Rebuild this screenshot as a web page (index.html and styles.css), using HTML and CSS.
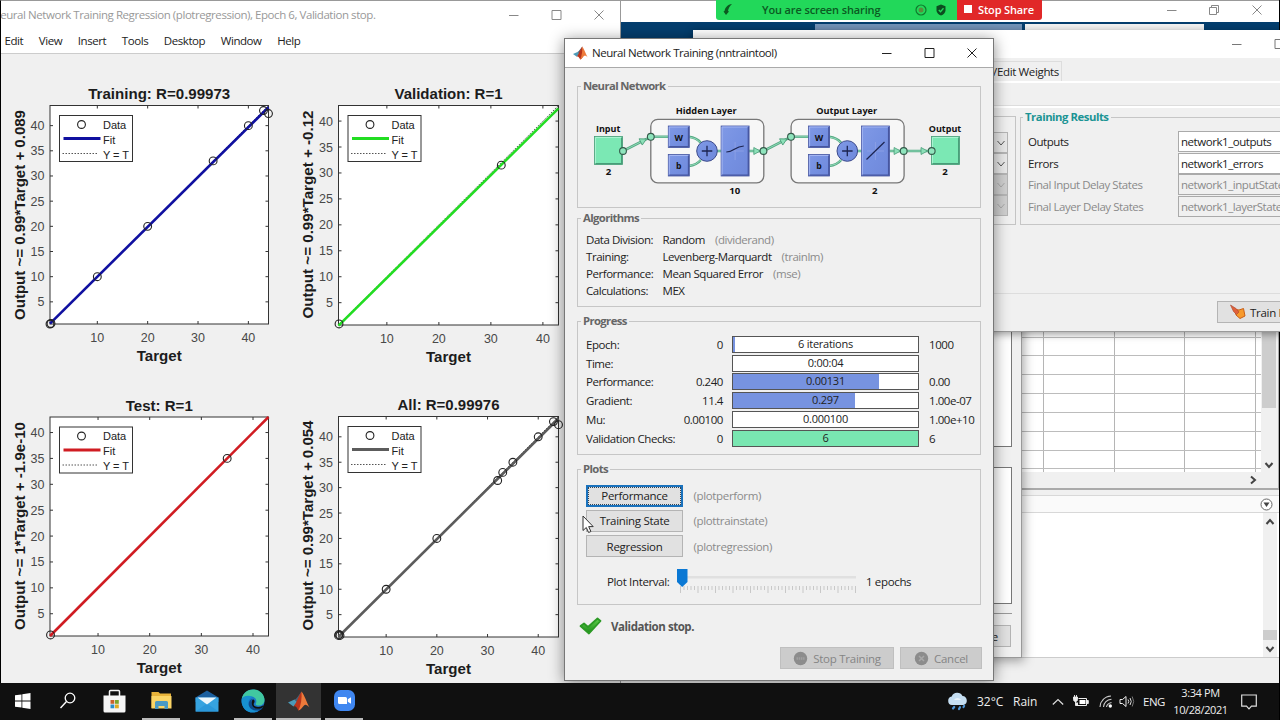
FILE: index.html
```html
<!DOCTYPE html>
<html lang="en">
<head>
    <meta charset="UTF-8">
    <title>Neural Network Training (nntraintool)</title>
    <meta name="viewport" content="width=device-width">
    <link rel="stylesheet" href="styles.css">
</head>
<body>
<svg class="defs" width="0" height="0">
    <defs>
        <symbol id="controls" viewBox="0 0 127 20">
            <path d="M16 10.500h9.500M59 5.500h9v9h-9zM101.500 5.500l9 9M110.500 5.500l-9 9"/>
        </symbol>
        <symbol id="controlsRestore" viewBox="0 0 127 20">
            <path d="M16 10.500h9.500M58.500 7.500h7v7h-7zM60.500 7.500v-2h7v7h-2M101.500 5.500l9 9M110.500 5.500l-9 9"/>
        </symbol>
        <symbol id="matlab" viewBox="0 0 22 20">
            <path d="M0 11.500L6.500 8.500 9.500 11 5.500 15.500z" fill="#4b9ab8"/>
            <path d="M6.500 8.500C9 8 11 3.500 13.500 0.500L9.500 11z" fill="#45647c"/>
            <path d="M13.500 .5C10.500 5 9 11 5.500 15.500 8 14.500 9 17 10.500 19.500 13.500 18.500 15 13.500 17 13.500z" fill="#b8341c"/>
            <path d="M13.500 .5C16.500 4 18.500 11 21.500 16.500 19 14 17.500 13 16 14.500 14.500 16 13 18.500 10.500 19.500 13 14 14 7 13.500 .5z" fill="#ee7b3b"/>
        </symbol>
        <symbol id="down" viewBox="0 0 10 10"><path d="M1.500 3l3.500 4 3.500-4"/></symbol>
        <linearGradient id="bevelBlue" x2="1" y2="1"><stop offset="0" stop-color="#8099e6"/><stop offset=".5" stop-color="#7590e1"/><stop offset="1" stop-color="#6f88da"/></linearGradient>
        <linearGradient id="greenCheck" x2="0" y2="1"><stop offset="0" stop-color="#5fd04a"/><stop offset="1" stop-color="#1d8c1a"/></linearGradient>
    </defs>
</svg>

<div class="desktop">

    <!-- MATLAB main window -->
    <div class="window main_window">
        <div class="titlebar"><svg class="controls faded"><use href="#controlsRestore"/></svg></div>
        <div class="ribbon"><div class="ribbon_tabs"></div><div class="ribbon_search"></div></div>
        <div class="variables">
            <div class="sheet"></div>
            <div class="vscroll"><div class="thumb"></div><svg class="arrow"><use href="#down"/></svg></div>
            <div class="hscroll"><svg class="arrow right"><use href="#down"/></svg></div>
        </div>
        <div class="command_head">
            <svg width="13" height="13"><circle cx="6.500" cy="6.500" r="5.500" fill="#fff" stroke="#666"/><path d="M3.500 4.500h6L6.500 9z" fill="#444"/></svg>
        </div>
        <div class="command">
            <div class="vscroll command_scroll"><svg class="arrow up"><use href="#down"/></svg><div class="thumb"></div><svg class="arrow"><use href="#down"/></svg></div>
        </div>
    </div>

    <div class="share_bar">
        <div class="share_green">
            <svg width="10" height="12" viewBox="0 0 10 12"><path d="M9 0C4.500 .5 2 3.500 1.500 7L.5 7.500 3 11 6 7.500 5 7C5.200 4.500 7 2 9 0z" fill="#0c5a20"/></svg>
            <span>You are screen sharing</span>
            <svg width="12" height="12" viewBox="0 0 12 12"><circle cx="6" cy="6" r="5" fill="none" stroke="#0f7a2c" stroke-width="1.200"/><circle cx="6" cy="6" r="2.500" fill="#5c8c3c"/></svg>
            <svg width="10" height="12" viewBox="0 0 10 12"><path d="M5 .5L9.500 2.300v4C9.500 9 7.500 10.800 5 11.500 2.500 10.800.5 9 .5 6.300v-4z" fill="#0c4d20"/><path d="M2.800 6L4.500 7.700 7.500 4.300" fill="none" stroke="#22d85a" stroke-width="1.300"/></svg>
        </div>
        <div class="share_red"><i></i><span>Stop Share</span></div>
    </div>

    <!-- nntool manager, mostly hidden -->
    <div class="window manager">
        <div class="list first"></div>
        <div class="list second"></div>
        <div class="rule"></div>
        <div class="btn">Close</div>
    </div>

    <!-- network1 window -->
    <div class="window network">
        <div class="titlebar"><svg class="controls gray"><use href="#controls"/></svg></div>
        <div class="tabs"><span class="tab">View/Edit Weights</span></div>
        <div class="subtabs"></div>
        <div class="network_row">
            <div class="combos">
                <div class="combo"><svg><use href="#down"/></svg></div>
                <div class="combo"><svg><use href="#down"/></svg></div>
                <div class="combo off"><svg><use href="#down"/></svg></div>
                <div class="combo off"><svg><use href="#down"/></svg></div>
            </div>
            <fieldset class="results">
                <legend>Training Results</legend>
                <div class="field"><span>Outputs</span><b>network1_outputs</b></div>
                <div class="field"><span>Errors</span><b>network1_errors</b></div>
                <div class="field off"><span>Final Input Delay States</span><b>network1_inputStates</b></div>
                <div class="field off"><span>Final Layer Delay States</span><b>network1_layerStates</b></div>
            </fieldset>
        </div>
        <div class="train_bar">
            <div class="btn">
                <svg width="16" height="16" viewBox="0 0 16 16"><path d="M5 5.500L9 6 13.500 4.500 15 12 10 14.500 6 11z" fill="#f79a2c" stroke="#c85f18"/><path d="M.5 1L6 4.500 9 8 6.500 10.500 3.500 7.500z" fill="#e0603a" stroke="#a8442c" stroke-width=".6"/></svg>
                Train Network
            </div>
        </div>
    </div>

    <!-- regression figure -->
    <div class="window figure">
        <div class="titlebar">
            <span class="title">Neural Network Training Regression (plotregression), Epoch 6, Validation stop.</span>
            <svg class="controls faded"><use href="#controls"/></svg>
        </div>
        <div class="menu"><span>Edit</span><span>View</span><span>Insert</span><span>Tools</span><span>Desktop</span><span>Window</span><span>Help</span></div>
        <div class="plots">
            <svg id="plotTraining" viewBox="0 53 290 314"></svg>
            <svg id="plotValidation" viewBox="290 53 330 314"></svg>
            <svg id="plotTest" viewBox="0 367 290 316"></svg>
            <svg id="plotAll" viewBox="290 367 330 316"></svg>
        </div>
    </div>

    <!-- training dialog -->
    <div class="window dialog">
        <div class="titlebar">
            <svg class="app_icon"><use href="#matlab"/></svg>
            <span class="title">Neural Network Training (nntraintool)</span>
            <svg class="controls"><use href="#controls"/></svg>
        </div>
        <div class="dialog_body">
            <fieldset class="group_net">
                <legend>Neural Network</legend>
                <svg id="diagram" viewBox="578 94 402 113"></svg>
            </fieldset>

            <fieldset class="group_algo">
                <legend>Algorithms</legend>
                <div class="algo"><span>Data Division:</span>Random<em>(dividerand)</em></div>
                <div class="algo"><span>Training:</span>Levenberg-Marquardt<em>(trainlm)</em></div>
                <div class="algo"><span>Performance:</span>Mean Squared Error<em>(mse)</em></div>
                <div class="algo"><span>Calculations:</span>MEX</div>
            </fieldset>

            <fieldset class="group_progress">
                <legend>Progress</legend>
                <div class="progress"><span>Epoch:</span><span class="from">0</span><div class="bar"><i style="width:1%"></i><b>6 iterations</b></div><span class="to">1000</span></div>
                <div class="progress"><span>Time:</span><span class="from"></span><div class="bar"><b>0:00:04</b></div><span class="to"></span></div>
                <div class="progress"><span>Performance:</span><span class="from">0.240</span><div class="bar"><i style="width:78.7%"></i><b>0.00131</b></div><span class="to">0.00</span></div>
                <div class="progress"><span>Gradient:</span><span class="from">11.4</span><div class="bar"><i style="width:66%"></i><b>0.297</b></div><span class="to">1.00e-07</span></div>
                <div class="progress"><span>Mu:</span><span class="from">0.00100</span><div class="bar"><b>0.000100</b></div><span class="to">1.00e+10</span></div>
                <div class="progress"><span>Validation Checks:</span><span class="from">0</span><div class="bar"><i class="full" style="width:100%"></i><b>6</b></div><span class="to">6</span></div>
            </fieldset>

            <fieldset class="group_plots">
                <legend>Plots</legend>
                <div class="plot_row"><div class="btn focus">Performance</div><em>(plotperform)</em></div>
                <div class="plot_row"><div class="btn">Training State</div><em>(plottrainstate)</em></div>
                <div class="plot_row"><div class="btn">Regression</div><em>(plotregression)</em></div>
                <div class="interval">
                    <span>Plot Interval:</span>
                    <svg class="slider" width="184" height="28" viewBox="0 0 184 28"></svg>
                    <span>1 epochs</span>
                </div>
            </fieldset>

            <div class="status">
                <svg width="23" height="18" viewBox="0 0 23 18"><path d="M1.500 9L5 6.500l4 3.500L18.500 1.500 21.500 4 10 16.500z" fill="url(#greenCheck)" stroke="#2c9a25" stroke-width="1.800" stroke-linejoin="round"/></svg>
                <span>Validation stop.</span>
            </div>
            <div class="actions">
                <div class="btn stop"><svg width="15" height="15"><circle cx="7.500" cy="7.500" r="6.700" fill="#8c8c8c"/><path d="M3.500 7.500h8" stroke="#a0a0a0" stroke-width="2.500" stroke-dasharray="1.500 .7"/></svg>Stop Training</div>
                <div class="btn cancel"><svg width="15" height="15"><circle cx="7.500" cy="7.500" r="6.700" fill="#8c8c8c"/><path d="M5 5l5 5M10 5l-5 5" stroke="#a8a8a8" stroke-width="1.500"/></svg>Cancel</div>
            </div>
        </div>
    </div>

    <svg class="cursor" width="14" height="20" viewBox="0 0 14 20"><path d="M1 1v14.500l3.300-3L6.600 17.500l2.300-1L6.700 11.600h4.500z" fill="#fff" stroke="#333"/></svg>

    <!-- taskbar -->
    <div class="taskbar">
        <div class="task start"><svg width="16" height="16" viewBox="0 0 16 16"><path d="M0 2.300L6.500 1.400v6.200H0zM7.300 1.300L15.500 0v7.600H7.300zM0 8.400h6.500v6.200L0 13.700zM7.300 8.400h8.200V16l-8.200-1.200z" fill="#fff"/></svg></div>
        <div class="task search"><svg width="18" height="18" viewBox="0 0 18 18"><circle cx="11" cy="6" r="4.800" fill="none" stroke="#fff" stroke-width="1.300"/><path d="M7.500 9.500L1.500 16" stroke="#fff" stroke-width="1.400"/></svg></div>
        <div class="task"><svg width="23" height="24" viewBox="0 0 23 24"><path d="M6.500 7V2.500a1 1 0 0 1 1-1h8a1 1 0 0 1 1 1V7" fill="none" stroke="#f4f4f4" stroke-width="1.500"/><path d="M.5 6.500h22V22a1.500 1.500 0 0 1-1.500 1.500H2A1.500 1.500 0 0 1 .5 22z" fill="#f5f5f5"/><path d="M7.500 11h3.800v3.800H7.500z" fill="#c9622c"/><path d="M12 11h3.800v3.800H12z" fill="#7ca52c"/><path d="M7.500 15.500h3.800v3.800H7.500z" fill="#2c8fc9"/><path d="M12 15.500h3.800v3.800H12z" fill="#e0ab22"/></svg></div>
        <div class="task open"><svg width="21" height="19" viewBox="0 0 21 19"><path d="M.5 1h7l1.500 1.500h11V17H.5z" fill="#e8b33a"/><path d="M.5 5h20v12.500H.5z" fill="#fbd566"/><path d="M4 18v-6.500a1.500 1.500 0 0 1 1.500-1.500h10a1.500 1.500 0 0 1 1.500 1.500V18h-3.500v-3h-6v3z" fill="#4a9ac4"/></svg></div>
        <div class="task"><svg width="24" height="22" viewBox="0 0 24 22"><path d="M.5 7.500L12 .5l11.500 7V12H.5z" fill="#1b5f9e"/><path d="M.5 7.500h23v14H.5z" fill="#36a3e0"/><path d="M.5 21.500L12 13.500l11.500 8z" fill="#2b98da"/><path d="M2.500 7.500h19L12 14.500z" fill="#edf6fb"/></svg></div>
        <div class="task open edge"><svg width="24" height="24" viewBox="0 0 24 24"><circle cx="12" cy="12" r="11.500" fill="#1c77c8"/><path d="M.8 10C2 3.500 7 .5 12 .5 19 .5 23.500 5.500 23.500 11c0 3.500-2.500 5.500-5.500 5.500-2.500 0-4-1-3-2.500 1-2 0-5.500-4-6.500C6 6.500 2 8 .8 10z" fill="#41c7a0"/><path d="M.8 10C3 6.500 8 6 11.500 8 8 9 6.500 13 8 16.500 9.500 20.500 14 22 18 21 14 24.500 7 24 3.500 20 1 17 .3 13.500.8 10z" fill="#1790d0"/><path d="M11.500 10c-2 2-1.500 6 1 8 3 2.200 6.500 2 9.500.5-1 1.500-2.500 2.500-4 3-4 .5-8.500-.5-10-4.500-1-3 .5-6.500 3.500-7z" fill="#0d4a8c"/><path d="M12 10.200c2.500 1 1.500 3 .8 4.300-.8 2 2.200 4 6 3.300 1.500-.3 3-1 3.700-2-.2 1.500-1 3-2.500 3.500-3 1-6.500.5-8-1.500-2-2.500-1.800-6 0-7.600z" fill="#101010"/></svg></div>
        <div class="task open active"><svg width="22" height="20"><use href="#matlab"/></svg></div>
        <div class="task open zoom"><svg width="21" height="21" viewBox="0 0 21 21"><rect width="21" height="21" rx="6.500" fill="#4087f0"/><path d="M4 7h7.500a1.500 1.500 0 0 1 1.500 1.500V14H5.500A1.500 1.500 0 0 1 4 12.500zM13.800 9.300L17 7.200v6.600l-3.200-2.100z" fill="#fff"/></svg></div>
        <div class="tray">
            <svg class="weather" width="21" height="20" viewBox="0 0 21 20"><path d="M5 13a4.300 4.300 0 0 1-.3-8.500A6 6 0 0 1 15.500 4 4.600 4.600 0 0 1 16.500 13z" fill="#c5def2"/><path d="M7 8a4 4 0 0 1 7 0" fill="#e9f3fb"/><path d="M6 16.500l1.200-1.500M12 17l1-1.800M16.500 15l.6-1" stroke="#4c95d8" stroke-width="2.200" stroke-linecap="round"/></svg>
            <span class="temp">32°C</span><span class="rain">Rain</span>
            <svg class="chev" width="12" height="8" viewBox="0 0 12 8"><path d="M.8 6.500L6 1.500l5.200 5" fill="none" stroke="#ddd" stroke-width="1.200"/></svg>
            <svg class="battery" width="16" height="13" viewBox="0 0 16 13"><path d="M5.500 3.500h8v7H4.500v-3" fill="none" stroke="#eee"/><path d="M14 5.500h1.300v3H14zM.5 2h4v2.500a2 2 0 0 1-4 0zM1.500 0v2M3.500 0v2M2.500 6v4.500h3" fill="#eee" stroke="#eee" stroke-width=".9"/><path d="M6.500 5h6v4h-6z" fill="#fff"/></svg>
            <svg class="wifi" width="14" height="13" viewBox="0 0 14 13"><path d="M1 12C1.500 6 5.500 1.500 12 1M4.500 12C5 8 8 4.800 12.500 4.300M7.500 12C8 9.500 10 8 12.500 7.500" fill="none" stroke="#ccc" stroke-width="1.100"/><circle cx="11.300" cy="11" r="1.700" fill="#fff"/></svg>
            <svg class="sound" width="16" height="13" viewBox="0 0 16 13"><path d="M1 4.500h2.500L7 1.500v10l-3.500-3H1z" fill="none" stroke="#eee"/><path d="M9 4.500q1.500 2 0 4M11 3q2.500 3.500 0 7" fill="none" stroke="#ddd"/><path d="M13.200 1.500q3 5 0 10" fill="none" stroke="#777"/></svg>
            <span class="lang">ENG</span>
            <div class="clock"><span>3:34 PM</span><span>10/28/2021</span></div>
            <svg class="notes" width="16" height="16" viewBox="0 0 16 16"><path d="M.7 1h14.600v11.200H10.500L8 14.800 5.500 12.200H.7z" fill="none" stroke="#ddd" stroke-width="1.200"/></svg>
        </div>
    </div>
</div>
<script src="script.js"></script>
</body>
</html>
```
FILE: styles.css
```css
body {
  margin: 0;
  font-family: "Open Sans", "Noto Sans", sans-serif;
  font-size: 11.5px;
  letter-spacing: -0.45px;
  color: #222;
  overflow: hidden;
}

.defs {
  position: absolute;
}

.desktop {
  position: relative;
  width: 1280px;
  height: 720px;
  overflow: hidden;
  background: #000;
}

.window {
  position: absolute;
  box-sizing: border-box;
  overflow: hidden;
  background: #f0f0f0;
}

.titlebar {
  display: flex;
  align-items: center;
  background: #fff;
  white-space: nowrap;
}

.title {
  padding-bottom: 2px;
}

.controls {
  width: 127px;
  height: 20px;
  flex: none;
  margin-left: auto;
  fill: none;
  stroke: #222;
  stroke-width: 1;
}

.controls.faded { stroke: #888; }
.controls.gray { stroke: #777; }

fieldset {
  box-sizing: border-box;
  margin: 0;
  padding: 0;
  border: 1px solid #c6c6c6;
  min-width: 0;
}

legend {
  height: 16px;
  line-height: 16px;
  margin-left: 3px;
  padding: 0 2px;
  font-size: 11.3px;
  font-weight: bold;
  letter-spacing: -0.62px;
  color: #666;
}

em {
  font-style: normal;
  color: #8b8b8b;
}

.btn {
  box-sizing: border-box;
  display: flex;
  align-items: center;
  justify-content: center;
  border: 1px solid #b4b4b4;
  background: #e1e1e1;
  white-space: nowrap;
  color: #222;
}

.arrow {
  width: 10px;
  height: 10px;
  fill: none;
  stroke: #444;
  stroke-width: 2;
}

.arrow.right { transform: rotate(-90deg); }
.arrow.up { transform: rotate(180deg); }

/* main window */
.main_window {
  left: 620px;
  top: 0;
  width: 659px;
  height: 683px;
  border-top: 1px solid #999;
}

.main_window > .titlebar {
  height: 21px;
  padding-right: 1px;
}

.main_window > .titlebar .controls { margin-bottom: 3px; }

.ribbon {
  height: 309px;
  display: flex;
  align-items: flex-start;
  gap: 3px;
  padding-left: 195px;
  background: #043e6e;
}

.ribbon_tabs, .ribbon_search {
  margin-top: 2px;
  width: 207px;
  height: 8px;
  background: #7393b8;
}

.ribbon_search {
  width: 179px;
  background: #f2f2f2;
}

.variables {
  display: grid;
  grid-template-columns: 641px 16px;
  grid-template-rows: 141px 16px;
  border-right: 1px solid #aaa;
  border-bottom: 2px solid #aaa;
}

.sheet {
  background:
    repeating-linear-gradient(to bottom, transparent 0 5.5px, #bcbcbc 5.5px 6.5px, transparent 6.5px 18.85px),
    repeating-linear-gradient(to right, transparent 0 1px, #b5b5b5 1px 2px, transparent 2px 70.4px),
    #fff;
}

.vscroll {
  display: flex;
  flex-direction: column;
  justify-content: space-between;
  align-items: center;
  background: #f0f0f0;
}

.vscroll .thumb {
  width: 14px;
  height: 77px;
  background: #cdcdcd;
}

.vscroll > .arrow:last-child { margin-bottom: 2px; }

.hscroll {
  grid-column: 1 / 3;
  display: flex;
  align-items: center;
  padding-left: 628px;
}

.command_head {
  display: flex;
  align-items: center;
  justify-content: flex-end;
  box-sizing: border-box;
  height: 18px;
  margin-top: 5px;
  padding-right: 6px;
  border-top: 1px solid #d8d8d8;
  border-bottom: 1px solid #d8d8d8;
  background: #fafafa;
}

.command {
  display: flex;
  justify-content: flex-end;
  height: 144px;
  background: #fff;
  border-bottom: 1px solid #ccc;
  padding-right: 2px;
}

.command_scroll {
  box-sizing: border-box;
  width: 14px;
  padding: 4px 0 1px;
}

.command_scroll .thumb {
  height: 10px;
  margin: auto 0 4px;
}

/* sharing bar */
.share_bar {
  position: absolute;
  left: 716px;
  top: 0;
  display: flex;
  height: 20px;
  font-weight: 600;
  font-size: 11px;
}

.share_green {
  display: flex;
  align-items: center;
  width: 241px;
  box-sizing: border-box;
  padding-left: 7px;
  background: #22d85a;
  color: #0b5a22;
  border-radius: 0 0 0 3px;
}

.share_green span {
  width: 119px;
  margin: 0 34px 0 29px;
  padding-bottom: 1px;
  letter-spacing: -0.12px;
  white-space: nowrap;
}

.share_green svg:last-child { margin-left: 9px; }

.share_red {
  display: flex;
  align-items: center;
  width: 85px;
  box-sizing: border-box;
  padding: 0 0 2px 7px;
  background: #e12828;
  color: #fff;
  white-space: nowrap;
  letter-spacing: -0.15px;
  border-radius: 0 0 3px 0;
}

.share_red i {
  width: 8px;
  height: 8px;
  margin-right: 6px;
  background: #fff;
}

/* manager window */
.manager {
  left: 860px;
  top: 300px;
  width: 162px;
  height: 358px;
  border-right: 1px solid #999;
  border-bottom: 1px solid #999;
  box-shadow: 2px 3px 10px rgba(0, 0, 0, .35);
}

.list {
  box-sizing: border-box;
  width: 152px;
  border: 1px solid #777;
  background: #fff;
}

.list.first { height: 147px; }
.list.second { height: 137px; margin-top: 20px; }

.rule {
  width: 152px;
  height: 9px;
  border-bottom: 1px solid #999;
}

.manager .btn {
  width: 60px;
  height: 22px;
  margin: 11px 0 0 91px;
  justify-content: flex-start;
  padding-left: 19px;
}

/* network window */
.network {
  left: 693px;
  top: 30px;
  width: 650px;
  height: 302px;
  border-bottom: 1px solid #999;
  box-shadow: 0 2px 8px rgba(0, 0, 0, .4);
}

.network .titlebar { height: 28px; }
.network .controls { margin-bottom: 1px; }

.tabs {
  display: flex;
  align-items: flex-end;
  height: 23px;
  border-bottom: 2px solid #fff;
}

.tab {
  box-sizing: border-box;
  height: 20px;
  width: 110px;
  margin-left: 259px;
  line-height: 19px;
  padding-right: 2px;
  text-align: right;
  border: 1px solid #ddd;
  border-bottom: 0;
  white-space: nowrap;
  letter-spacing: -0.35px;
}

.subtabs {
  height: 22px;
  border-bottom: 1px solid #ddd;
}

.network_row {
  display: flex;
  align-items: flex-start;
  padding-left: 202px;
  border-top: 2px solid #fff;
}

.combos {
  box-sizing: border-box;
  width: 121px;
  height: 109px;
  margin: 8px 4px 0 0;
  padding: 15px 7px 0 97px;
  border: 1px solid #c4c4c4;
}

.combo {
  box-sizing: border-box;
  height: 21px;
  border: 1px solid #b5b5b5;
  background: #e9e9e9;
}

.combo svg {
  width: 10px;
  height: 10px;
  margin: 5px 0 0 2px;
  display: block;
  fill: none;
  stroke: #555;
}

.combo.off { background: #cfcfcf; }
.combo.off svg { stroke: #aaa; }

.results {
  width: 320px;
  height: 116px;
  margin-top: 1px;
}

.results legend {
  margin-left: 2px;
  color: #1b9494;
  letter-spacing: -0.45px;
}

.field {
  display: flex;
  align-items: center;
  height: 21.7px;
  padding-left: 7px;
}

legend + .field { margin-top: 5.5px; }

.field span {
  width: 150px;
  white-space: nowrap;
}

.field b {
  box-sizing: border-box;
  flex: 1;
  height: 21px;
  line-height: 19px;
  padding-left: 2px;
  border: 1px solid #aaa;
  background: #fff;
  font-weight: normal;
}

.field.off { color: #8a8a8a; }
.field.off b { background: #f0f0f0; }

.train_bar {
  margin-top: 68px;
  border-top: 1px solid #ddd;
  padding: 7px 0 0 524px;
}

.train_bar .btn {
  width: 120px;
  height: 22px;
  justify-content: flex-start;
  padding-left: 12px;
  gap: 4px;
  letter-spacing: -0.3px;
}

/* figure window */
.figure {
  left: 0;
  top: 0;
  width: 621px;
  height: 683px;
  border-left: 1px solid #000;
  border-top: 1px solid #999;
  border-right: 1px solid #999;
}

.figure .titlebar {
  height: 28px;
  color: #999;
}

.figure .title {
  margin-left: -9px;
  letter-spacing: -0.44px;
}

.figure .controls { margin-bottom: 1px; }

.menu {
  display: flex;
  gap: 15.7px;
  height: 24px;
  line-height: 24px;
  padding-left: 3.5px;
  background: #fff;
  border-bottom: 1px solid #ccc;
}

.plots {
  display: grid;
  grid-template-columns: 290px 330px;
  grid-template-rows: 314px 316px;
  margin: -1px 0 0 -1px;
}

.plots svg {
  width: 100%;
  height: 100%;
  font-family: "Liberation Sans", Arial, sans-serif;
  letter-spacing: 0;
}

.axes {
  fill: #fff;
  stroke: #333;
}

.ticks {
  stroke: #333;
}

.tick_label {
  font-size: 12.5px;
  fill: #484848;
}

.plot_title, .axis_label {
  font-size: 15px;
  font-weight: bold;
  fill: #1c1c1c;
}

.legend_text {
  font-size: 11px;
  fill: #222;
}

.marker {
  fill: none;
  stroke: #222;
  stroke-width: 1.1;
}

.dotted {
  stroke: #555;
  stroke-dasharray: 1.5 1.5;
}

/* training dialog */
.dialog {
  left: 564px;
  top: 38px;
  width: 430px;
  height: 643px;
  border: 1px solid #777;
  box-shadow: 0 2px 14px rgba(0, 0, 0, .45);
}

.dialog .titlebar {
  height: 28px;
  border-bottom: 1px solid #aaa;
  color: #222;
}

.app_icon {
  width: 15px;
  height: 14px;
  margin: 0 4px 0 8px;
}

.dialog_body {
  padding: 10px 12px 0;
}

.group_net { height: 130px; }
#diagram { display: block; width: 402px; height: 113px; letter-spacing: 0; }

.group_algo { height: 97px; margin-top: 2px; }

.algo {
  height: 17px;
  line-height: 16px;
  padding-left: 8px;
  display: flex;
}

legend + .algo { margin-top: 6px; }
.algo span { width: 76.5px; }
.algo em { margin-left: 10px; }

.group_progress { height: 142px; margin-top: 6px; }

.progress {
  display: grid;
  grid-template-columns: 70px 67px 187px 60px;
  align-items: center;
  height: 18.8px;
  padding-left: 8px;
  white-space: nowrap;
}

legend + .progress { margin-top: 6px; }
.progress .from { text-align: right; }
.progress .to { padding-left: 19px; }

.bar {
  position: relative;
  box-sizing: border-box;
  height: 17px;
  margin: 0 -9px 0 9px;
  border: 1px solid #555;
  background: #fff;
}

.bar i {
  display: block;
  height: 100%;
  background: #7793e0;
}

.bar i.full { background: #79e6b1; }

/* value printed over the fill */
.bar b {
  position: absolute;
  inset: 0;
  line-height: 14px;
  text-align: center;
  font-weight: normal;
  font-size: 11px;
  letter-spacing: -0.25px;
}

.group_plots { height: 144px; margin-top: 6px; }

.plot_row {
  display: flex;
  align-items: center;
  height: 25.3px;
  padding-left: 8px;
}

legend + .plot_row { margin-top: 6px; }

.plot_row .btn {
  width: 97px;
  height: 22px;
  margin-right: 10.5px;
  letter-spacing: -0.3px;
}

.plot_row em { letter-spacing: -0.35px; }

.btn.focus {
  border: 2px solid #1a72bd;
  outline: 1px dotted #345;
  outline-offset: -3px;
}

.interval {
  display: flex;
  align-items: center;
  height: 28px;
  margin-top: 9px;
  padding-left: 29px;
  letter-spacing: -0.35px;
}

.interval span:first-child { width: 66px; }
.slider { margin: 0 10px 0 -1px; }

.status {
  display: flex;
  align-items: center;
  gap: 9px;
  height: 22px;
  margin: 10px 0 0 2px;
  font-weight: bold;
  color: #555;
}

.actions {
  display: flex;
  justify-content: flex-end;
  gap: 6px;
  margin: 10px -1px 0 0;
}

.actions .btn {
  height: 22px;
  gap: 5px;
  background: #ccc;
  border-color: #bfbfbf;
  color: #858585;
  letter-spacing: -0.25px;
}

.stop { width: 114px; }
.cancel { width: 82px; }

.cursor {
  position: absolute;
  left: 582px;
  top: 515px;
}

/* taskbar */
.taskbar {
  position: absolute;
  left: 0;
  top: 683px;
  width: 1279px;
  height: 37px;
  display: flex;
  background: #101010;
  color: #eee;
  letter-spacing: 0;
}

.task {
  box-sizing: border-box;
  width: 46px;
  display: flex;
  align-items: center;
  justify-content: center;
  border-bottom: 2px solid transparent;
}

.task.start { width: 45px; }
.task.search { width: 46px; }
.task.open {
  width: 38px;
  margin: 0 4px;
  border-bottom-color: #bbb;
}
.task.open.active { width: 45px; margin: 0; background: #333; }
.task.open.zoom { margin: 0 0 0 4px; }

.task:nth-child(3) { width: 47px; }

.tray {
  flex: 1;
  display: flex;
  align-items: center;
  justify-content: flex-end;
  font-size: 12px;
  white-space: nowrap;
}

.temp { width: 27px; margin: 0 9px 0 9px; }
.rain { width: 25px; margin-right: 14px; }
.battery { margin: 0 10px 0 9px; }
.wifi { margin-right: 6px; }
.lang { width: 21px; margin: 0 10px 0 8px; font-size: 11.5px; letter-spacing: -0.5px; }

.clock {
  width: 53px;
  display: flex;
  flex-direction: column;
  align-items: center;
  line-height: 16.5px;
  font-size: 11px;
  letter-spacing: -0.4px;
}

.notes { margin: 0 22px 0 14px; }
```
FILE: script.js
```js
function tag(name, attrs, text) {
    const a = Object.entries(attrs).map(([k, v]) => `${k}="${v}"`).join(' ');
    return `<${name} ${a}>${text || ''}</${name}>`;
}

// centred text squeezed to a known width
function label(cls, cx, y, width, text, extra) {
    return tag('text', Object.assign({class: cls, x: cx, y: y, 'text-anchor': 'middle', textLength: width, lengthAdjust: 'spacingAndGlyphs'}, extra), text);
}

function drawPlot(p) {
    const sx = v => p.x0 + (v - p.min) * (p.x1 - p.x0) / (p.max - p.min);
    const sy = v => p.y1 - (v - p.min) * (p.y1 - p.y0) / (p.max - p.min);
    const cx = (p.x0 + p.x1) / 2;
    let s = tag('rect', {class: 'axes', x: p.x0, y: p.y0, width: p.x1 - p.x0, height: p.y1 - p.y0});

    let ticks = '';
    for (let v = 10; v <= 40; v += 10) {
        ticks += `M${sx(v)} ${p.y1}v-3M${sx(v)} ${p.y0}v3`;
        s += tag('text', {class: 'tick_label', x: sx(v), y: p.y1 + 17.5, 'text-anchor': 'middle'}, v);
    }
    for (let v = 5; v <= 40; v += 5) {
        ticks += `M${p.x0} ${sy(v)}h3M${p.x1} ${sy(v)}h-3`;
        s += tag('text', {class: 'tick_label', x: p.x0 - 5.5, y: sy(v) + 4.5, 'text-anchor': 'end'}, v);
    }
    s += tag('path', {class: 'ticks', d: ticks});

    s += tag('line', {class: 'dotted', x1: sx(p.min), y1: sy(p.min), x2: sx(p.max), y2: sy(p.max)});
    s += tag('line', {x1: sx(p.min), y1: sy(p.fit[0] * p.min + p.fit[1]), x2: sx(p.max), y2: sy(p.fit[0] * p.max + p.fit[1]), stroke: p.color, 'stroke-width': 2.6});
    p.points.forEach(([x, y]) => {
        s += tag('circle', {class: 'marker', cx: sx(x), cy: sy(y), r: 3.9});
    });

    const lx = p.x0 + 9.5, ly = p.y0 + 10;
    s += tag('rect', {class: 'axes', x: lx, y: ly, width: 73, height: 46});
    s += tag('circle', {class: 'marker', cx: lx + 22, cy: ly + 9, r: 3.9});
    s += tag('line', {x1: lx + 4, y1: ly + 23, x2: lx + 41, y2: ly + 23, stroke: p.color, 'stroke-width': 2.8});
    s += tag('line', {class: 'dotted', x1: lx + 3, y1: ly + 38, x2: lx + 39, y2: ly + 38});
    s += tag('text', {class: 'legend_text', x: lx + 43.5, y: ly + 13}, 'Data');
    s += tag('text', {class: 'legend_text', x: lx + 43.5, y: ly + 28}, 'Fit');
    s += tag('text', {class: 'legend_text', x: lx + 43.5, y: ly + 43, textLength: 26}, 'Y = T');

    s += label('plot_title', cx, p.titleY, p.titleW, p.title);
    s += label('axis_label', cx, p.y1 + 36.5, 45, 'Target');
    s += label('axis_label', 0, 0, p.labelW, p.ylabel, {transform: `translate(${p.x0 - 25.5} ${p.labelY}) rotate(-90)`});
    document.getElementById(p.id).innerHTML = s;
}

drawPlot({id: 'plotTraining', x0: 50, x1: 268.5, y0: 105.5, y1: 324, min: 0.6, max: 44, fit: [0.99, 0.089], color: '#1010a0',
    title: 'Training: R=0.99973', titleY: 99, titleW: 142, ylabel: 'Output ~= 0.99*Target + 0.089', labelY: 215, labelW: 210,
    points: [[0.6, 0.6], [0.8, 0.7], [10, 10], [20, 20], [33, 33], [40, 40], [43, 43], [44, 42.4]]});
drawPlot({id: 'plotValidation', x0: 338.5, x1: 558.5, y0: 105.5, y1: 325, min: 0.7, max: 43, fit: [0.99, -0.12], color: '#22dd22',
    title: 'Validation: R=1', titleY: 98.5, titleW: 108, ylabel: 'Output ~= 0.99*Target + -0.12', labelY: 214.5, labelW: 208,
    points: [[0.8, 0.9], [32, 31.5]]});
drawPlot({id: 'plotTest', x0: 50, x1: 268.5, y0: 417, y1: 636, min: 0.7, max: 43, fit: [1, 0], color: '#d01c22',
    title: 'Test: R=1', titleY: 410.5, titleW: 67, ylabel: 'Output ~= 1*Target + -1.9e-10', labelY: 526, labelW: 208,
    points: [[0.8, 0.9], [35, 35]]});
drawPlot({id: 'plotAll', x0: 338.5, x1: 558.5, y0: 416.5, y1: 637, min: 0.6, max: 44, fit: [0.99, 0.054], color: '#5c5c5c',
    title: 'All: R=0.99976', titleY: 410, titleW: 102, ylabel: 'Output ~= 0.99*Target + 0.054', labelY: 525.5, labelW: 210,
    points: [[0.6, 0.9], [0.9, 0.9], [0.7, 1.1], [10, 10], [20, 20], [32, 31.4], [33, 33], [35, 35], [40, 40], [43, 43], [44, 42.4]]});

// network diagram
function block(x, y, w, h, kind) {
    const fill = kind === 'io' ? '#7be8b4' : 'url(#bevelBlue)';
    const dark = kind === 'io' ? '#489c78' : '#4656a0';
    const light = kind === 'io' ? '#a8f3d0' : '#a3b5f2';
    return tag('rect', {x: x, y: y, width: w, height: h, fill: fill, stroke: dark, 'stroke-width': .8}) +
        tag('path', {d: `M${x + 1} ${y + h - 1}V${y + 1}H${x + w - 1}`, fill: 'none', stroke: light, 'stroke-width': 1}) +
        tag('path', {d: `M${x + w - .8} ${y + 1}V${y + h - .8}H${x + 1}`, fill: 'none', stroke: dark, 'stroke-width': 1.3});
}
function port(x, y) {
    return tag('circle', {cx: x, cy: y, r: 3.4, fill: '#8fe5bd', stroke: '#34594a', 'stroke-width': 1.1});
}
function wire(d) {
    return tag('path', {d: d, fill: 'none', stroke: '#55aa83', 'stroke-width': 2.6}) +
        tag('path', {d: d, fill: 'none', stroke: '#90d8b8', 'stroke-width': 1});
}
function arrow(x, y, angle) {
    return tag('path', {d: 'M-6-3.500L.5 0-6 3.500z', fill: '#8ce0b8', stroke: '#4a9c78', 'stroke-width': .8, transform: `translate(${x} ${y}) rotate(${angle})`});
}
function text(cx, y, w, t) {
    return label('', cx, y, w, t, {'font-size': 9.5, 'font-weight': 'bold', fill: '#111'});
}
function layer(x, curve) {
    return tag('rect', {x: x, y: 119.3, width: 113, height: 63.5, rx: 7, fill: '#f7f7f7', stroke: '#777', 'stroke-width': 1.3}) +
        wire(`M${x} 136.800h18M${x + 38} 136.800q8 1 12 6M${x + 38} 166q8-1 12-6M${x + 66} 151h5M${x + 98} 151h14`) +
        arrow(x + 109, 151, 0) +
        block(x + 17.5, 126, 21, 21.5) + block(x + 17.5, 154.5, 21, 21.5) + block(x + 70.3, 126, 28, 50) +
        tag('circle', {cx: x + 56.2, cy: 151, r: 10.3, fill: 'url(#bevelBlue)', stroke: '#3d4b8c'}) +
        tag('path', {d: `M${x + 51} 151h10.500M${x + 56.2} 145.800v10.500`, stroke: '#1c2450', 'stroke-width': 1.3}) +
        tag('path', {d: `M${x + 76} 151h17M${x + 84.3} 142v18`, stroke: '#90a2e6', 'stroke-width': .8}) +
        tag('path', {d: curve, fill: 'none', stroke: '#1c2450', 'stroke-width': 1.2}) +
        text(x + 28, 140.5, 8.5, 'W') + text(x + 28, 169, 5.5, 'b');
}
document.getElementById('diagram').innerHTML =
    block(594.5, 136.5, 28, 28, 'io') + block(931.5, 136.5, 28, 28, 'io') +
    layer(650.8, 'M726.300 152c8 0 8-5.500 17.500-6') + layer(791.1, 'M866.500 159.500L884.500 142') +
    wire('M623 151L650.800 136.800M763.500 151L791 136.800M903.500 151H931.700') +
    arrow(646, 139.2, -27) + arrow(786.5, 139.2, -27) + arrow(927, 151, 0) +
    port(623, 151) + port(650.8, 136.8) + port(763.5, 151) + port(791, 136.8) + port(903.7, 151) + port(931.7, 151) +
    text(706.2, 114.4, 61, 'Hidden Layer') + text(846.7, 114.4, 61, 'Output Layer') +
    text(608.2, 132.2, 24.5, 'Input') + text(945, 132.2, 32.5, 'Output') +
    text(608.6, 175.4, 5.5, '2') + text(734.7, 194.1, 11, '10') + text(874.8, 194.1, 5.5, '2') + text(945, 175.4, 5.5, '2');

// slider
let marks = '';
for (let i = 0; i <= 50; i++) {
    marks += `M${8.5 + i * 3.5} 18v${i % 5 ? 4 : 7}`;
}
document.querySelector('.slider').innerHTML =
    tag('rect', {x: 7, y: 8, width: 177, height: 2.5, fill: '#e0e0e0'}) +
    tag('path', {d: marks, stroke: '#c8c8c8'}) +
    tag('path', {d: 'M5 1h10.500v13L10.200 19 5 14z', fill: '#0a78d4'});
```
